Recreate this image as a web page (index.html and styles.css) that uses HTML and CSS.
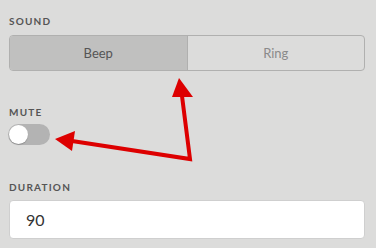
FILE: index.html
```html
<!DOCTYPE html>
<html>
<head>
<meta charset="utf-8">
<link rel="stylesheet" href="styles.css">
</head>
<body>
<div class="panel">
  <div class="field">
    <div class="label">SOUND</div>
    <div class="segmented">
      <div class="seg active">Beep</div>
      <div class="seg">Ring</div>
    </div>
  </div>
  <div class="field mute">
    <div class="label">MUTE</div>
    <div class="toggle"><div class="knob"></div></div>
  </div>
  <div class="field duration">
    <div class="label">DURATION</div>
    <div class="input">90</div>
  </div>
  <svg class="arrows" width="376" height="248" viewBox="0 0 376 248">
    <polyline points="182,96 190,159 72,141" fill="none" stroke="#dd0000" stroke-width="4" stroke-linejoin="miter"/>
    <polygon points="179,78 193,97 172,97" fill="#dd0000"/>
    <polygon points="55,139 75,131 72,151" fill="#dd0000"/>
  </svg>
</div>
</body>
</html>
```
FILE: styles.css
```css
html, body {
  margin: 0;
  padding: 0;
  background: #dcdcdb;
}
.panel {
  position: relative;
  width: 376px;
  height: 248px;
  padding: 0 11px 0 9px;
  box-sizing: border-box;
  font-family: Lato, "Open Sans", sans-serif;
  overflow: hidden;
}
.field {
  display: flex;
  flex-direction: column;
}
.label {
  font-size: 10px;
  font-weight: 700;
  letter-spacing: 1.2px;
  color: #555;
  line-height: 12px;
  height: 12px;
  margin-top: 15px;
  margin-bottom: 8px;
}
.segmented {
  display: flex;
  height: 36px;
  border: 1px solid #b0b0af;
  border-radius: 4px;
  box-sizing: border-box;
  overflow: hidden;
}
.seg {
  flex: 1;
  display: flex;
  align-items: center;
  justify-content: center;
  font-size: 13px;
  color: #8a8a8a;
}
.seg.active {
  background: #c0c0bf;
  color: #555;
  border-right: 1px solid #b0b0af;
}
.mute .label {
  margin-top: 35px;
  margin-bottom: 6px;
}
.toggle {
  width: 42px;
  height: 21px;
  border-radius: 11px;
  background: #b3b3b3;
  position: relative;
  margin-left: -1px;
}
.knob {
  position: absolute;
  left: 1px;
  top: 1px;
  width: 19px;
  height: 19px;
  border-radius: 50%;
  background: #fff;
  box-shadow: 0 1px 1px rgba(0,0,0,0.2);
}
.duration .label {
  margin-top: 36px;
  margin-bottom: 7px;
}
.input {
  height: 39px;
  box-sizing: border-box;
  background: #fff;
  border: 1px solid #cfcfcf;
  border-radius: 4px;
  padding-left: 16px;
  display: flex;
  align-items: center;
  font-size: 16px;
  color: #333;
}
.arrows {
  position: absolute;
  left: 0;
  top: 0;
  pointer-events: none;
}
```
